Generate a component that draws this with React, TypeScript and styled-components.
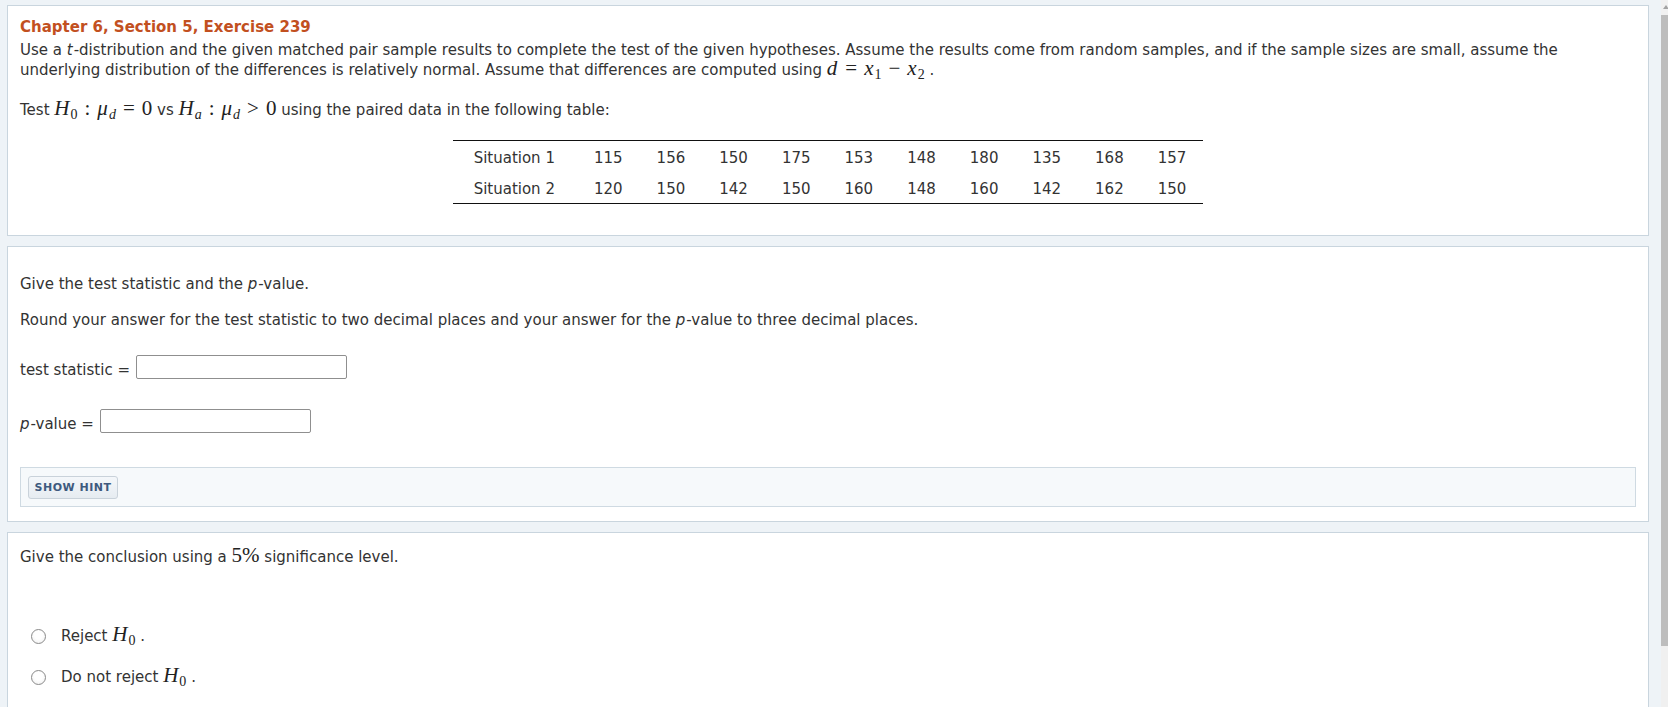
import React from "react";
import styled, { createGlobalStyle } from "styled-components";

const Global = createGlobalStyle`
  html, body {
    margin: 0;
    padding: 0;
    height: 707px;
    overflow: hidden;
    background: #eef3f7;
  }
  #root { height: 707px; }
`;

const Page = styled.div`
  display: flex;
  height: 707px;
  font-family: "DejaVu Sans", Verdana, sans-serif;
  font-size: 15px;
  line-height: 20px;
  color: #333;
`;

const Content = styled.div`
  flex: 1;
  display: flex;
  flex-direction: column;
  gap: 10px;
  padding: 5px 12px 0 7px;
  min-width: 0;
`;

const Scrollbar = styled.div`
  width: 7px;
  display: flex;
  flex-direction: column;
  background: #f0f0f0;
`;

const ScrollArrow = styled.div`
  height: 15px;
  background: #f1f1f1;
  position: relative;
  &::after {
    content: "";
    position: absolute;
    left: 2px;
    top: 5px;
    border-left: 3px solid transparent;
    border-right: 3px solid transparent;
    border-bottom: 4px solid #a3a3a3;
  }
`;

const ScrollThumb = styled.div`
  height: 631px;
  background: #bdbdbd;
`;

const Card = styled.section<{ $pad: string }>`
  background: #fff;
  border: 1px solid #c9d5de;
  padding: ${(p) => p.$pad};
`;

const Title = styled.div`
  color: #c2501f;
  font-weight: bold;
  font-size: 15px;
  line-height: 20px;
  margin-bottom: 3px;
`;

const P = styled.p<{ $mt?: number }>`
  margin: ${(p) => p.$mt ?? 0}px 0 0;
`;

const Math = styled.span`
  font-family: "Liberation Serif", "Times New Roman", serif;
  font-size: 21px;
  line-height: 0;
  color: #222;
  white-space: nowrap;
`;

const V = styled.i`
  font-style: italic;
  padding-right: 1px;
`;

const Sub = styled.sub<{ $it?: boolean }>`
  font-size: 14px;
  line-height: 0;
  vertical-align: -4px;
  font-style: ${(p) => (p.$it ? "italic" : "normal")};
`;

const Op = styled.span`
  margin: 0 7px;
`;

const TextIt = styled.i`
  font-style: italic;
  padding-right: 1px;
`;

const TableWrap = styled.div`
  display: flex;
  justify-content: center;
  margin-top: 20px;
`;

const DataTable = styled.table`
  border-collapse: collapse;
  border-top: 1px solid #111;
  border-bottom: 1px solid #111;
`;

const Cell = styled.td<{ $label?: boolean }>`
  line-height: 21px;
  padding: ${(p) => (p.$label ? "7px 22px 3px 21px" : "7px 17px 3px")};
  text-align: left;
  white-space: nowrap;
  vertical-align: middle;
`;

const FieldRow = styled.div<{ $mt: number }>`
  display: flex;
  align-items: flex-end;
  margin-top: ${(p) => p.$mt}px;
  height: 24px;
`;

const FieldLabel = styled.label`
  line-height: 17px;
  margin-right: 6px;
`;

const Input = styled.input`
  box-sizing: border-box;
  width: 211px;
  height: 24px;
  border: 1px solid #8f8f8f;
  border-radius: 2px;
  background: #fff;
  margin: 0;
  padding: 0 4px;
  font: inherit;
`;

const HintBox = styled.div`
  margin-top: 34px;
  background: #f6f9fb;
  border: 1px solid #cfdae2;
  padding: 8px 7px 7px;
`;

const HintButton = styled.button`
  box-sizing: border-box;
  height: 23px;
  width: 90px;
  padding: 0;
  border: 1px solid #c9d2da;
  border-radius: 3px;
  background: linear-gradient(#f4f7fa, #e6ecf1);
  color: #3e5a7e;
  font-family: "DejaVu Sans", Verdana, sans-serif;
  font-weight: bold;
  font-size: 11px;
  letter-spacing: 0.5px;
  display: block;
`;

const Options = styled.div`
  display: flex;
  flex-direction: column;
  gap: 17px;
  margin-top: 57px;
  padding-left: 11px;
`;

const Option = styled.label`
  display: flex;
  align-items: center;
  height: 24px;
`;

const Radio = styled.input`
  appearance: none;
  box-sizing: border-box;
  width: 15px;
  height: 15px;
  margin: 0 15px 0 0;
  border: 1px solid #8a8a8a;
  border-radius: 50%;
  background: radial-gradient(circle at 50% 40%, #fff 40%, #ececec 100%);
`;

const H0 = () => (
  <Math>
    <V>H</V>
    <Sub>0</Sub>
  </Math>
);

const sit1 = [115, 156, 150, 175, 153, 148, 180, 135, 168, 157];
const sit2 = [120, 150, 142, 150, 160, 148, 160, 142, 162, 150];

export default function App() {
  return (
    <>
      <Global />
      <Page>
        <Content>
          <Card $pad="11px 12px 31px">
            <Title>Chapter 6, Section 5, Exercise 239</Title>
            <P>
              Use a <TextIt>t</TextIt>-distribution and the given matched pair sample results to complete the test of
              the given hypotheses. Assume the results come from random samples, and if the sample sizes are small,
              assume the underlying distribution of the differences is relatively normal. Assume that differences are
              computed using{" "}
              <Math>
                <V>d</V>
                <Op>=</Op>
                <V>x</V>
                <Sub>1</Sub>
                <Op>−</Op>
                <V>x</V>
                <Sub>2</Sub>
              </Math>{" "}
              .
            </P>
            <P $mt={20}>
              Test{" "}
              <Math>
                <V>H</V>
                <Sub>0</Sub>
                <Op>:</Op>
                <V>μ</V>
                <Sub $it>d</Sub>
                <Op>=</Op>0
              </Math>{" "}
              vs{" "}
              <Math>
                <V>H</V>
                <Sub $it>a</Sub>
                <Op>:</Op>
                <V>μ</V>
                <Sub $it>d</Sub>
                <Op>&gt;</Op>0
              </Math>{" "}
              using the paired data in the following table:
            </P>
            <TableWrap>
              <DataTable>
                <tbody>
                  <tr>
                    <Cell $label>Situation 1</Cell>
                    {sit1.map((v, i) => (
                      <Cell key={i}>{v}</Cell>
                    ))}
                  </tr>
                  <tr>
                    <Cell $label>Situation 2</Cell>
                    {sit2.map((v, i) => (
                      <Cell key={i}>{v}</Cell>
                    ))}
                  </tr>
                </tbody>
              </DataTable>
            </TableWrap>
          </Card>

          <Card $pad="27px 12px 14px">
            <P>
              Give the test statistic and the <TextIt>p</TextIt>-value.
            </P>
            <P $mt={16}>
              Round your answer for the test statistic to two decimal places and your answer for the{" "}
              <TextIt>p</TextIt>-value to three decimal places.
            </P>
            <FieldRow $mt={25}>
              <FieldLabel>test statistic =</FieldLabel>
              <Input type="text" />
            </FieldRow>
            <FieldRow $mt={30}>
              <FieldLabel>
                <TextIt>p</TextIt>-value =
              </FieldLabel>
              <Input type="text" />
            </FieldRow>
            <HintBox>
              <HintButton type="button">SHOW HINT</HintButton>
            </HintBox>
          </Card>

          <Card $pad="14px 12px 40px">
            <P>
              Give the conclusion using a <Math>5%</Math> significance level.
            </P>
            <Options>
              <Option>
                <Radio type="radio" name="concl" />
                <span>
                  Reject <H0 /> .
                </span>
              </Option>
              <Option>
                <Radio type="radio" name="concl" />
                <span>
                  Do not reject <H0 /> .
                </span>
              </Option>
            </Options>
          </Card>
        </Content>
        <Scrollbar>
          <ScrollArrow />
          <ScrollThumb />
        </Scrollbar>
      </Page>
    </>
  );
}
